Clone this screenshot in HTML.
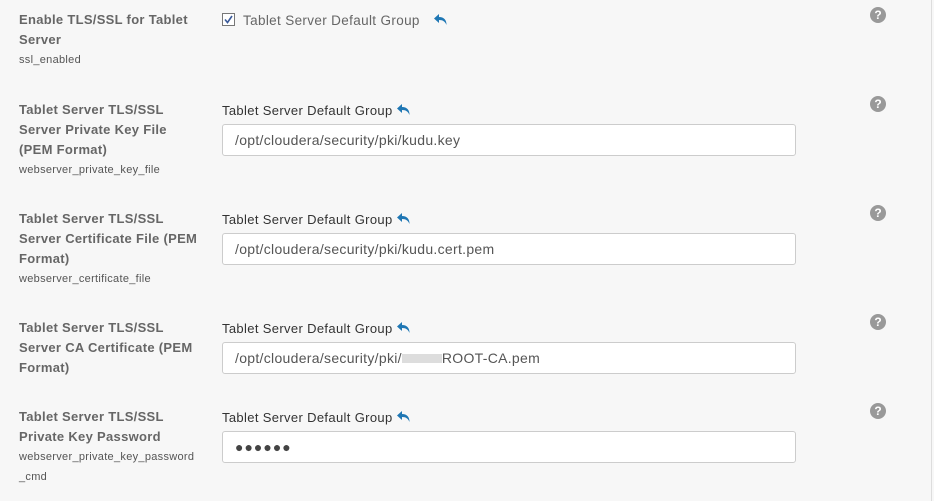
<!DOCTYPE html>
<html><head><style>
body{margin:0;width:934px;height:501px;background:#f7f7f7;font-family:"Liberation Sans",sans-serif;position:relative;overflow:hidden}
.edge{position:absolute;left:931px;top:0;width:1px;height:501px;background:#ddd}
.lbl{position:absolute;left:19px;width:200px;font-weight:bold;font-size:13px;line-height:20px;color:#666;letter-spacing:0.3px;white-space:nowrap}
.code{font-weight:normal;font-size:11px;color:#555;line-height:20px;letter-spacing:0.3px}
.grp{position:absolute;left:222px;font-size:13px;color:#333;letter-spacing:0.35px}
.inp{position:absolute;left:222px;height:30px;background:#fff;border:1px solid #ccc;border-radius:3px;font-size:14px;color:#555;line-height:30px;padding-left:12px;width:560px;letter-spacing:0.3px}
.help{position:absolute;left:870px;width:16px;height:16px;border-radius:50%;background:#999;color:#fff;font-weight:bold;font-size:12px;text-align:center;line-height:16px}
.undo{display:inline-block;vertical-align:-1px}
.cb{display:inline-block;width:11px;height:11px;border:1px solid #777;background:#fff;vertical-align:-1px;margin-right:8px;position:relative}
</style></head><body>
<div class="edge"></div>
<svg width="0" height="0" style="position:absolute"><defs><symbol id="u" viewBox="0 0 14 12"><path d="M5 0 L0 4.5 L5 9 L5 6 C9 6 11 7.5 12.5 11 C12.5 6 10 3 5 3 Z" fill="#1f77b4"/></symbol></defs></svg>

<div class="lbl" style="top:10px">Enable TLS/SSL for Tablet<br>Server<div class="code">ssl_enabled</div></div>
<div class="grp" style="top:13px;color:#666;font-size:13.5px"><span class="cb"><svg width="11" height="11" style="position:absolute;left:0;top:0"><path d="M2 5.5 L4.5 8.5 L9 2" stroke="#3a5a9a" stroke-width="1.6" fill="none"/></svg></span>Tablet Server Default Group <svg class="undo" width="14" height="12" style="margin-left:10px"><use href="#u"/></svg></div>
<div class="help" style="top:7px">?</div>

<div class="lbl" style="top:100px">Tablet Server TLS/SSL<br>Server Private Key File<br>(PEM Format)<div class="code">webserver_private_key_file</div></div>
<div class="grp" style="top:103px">Tablet Server Default Group <svg class="undo" width="14" height="12"><use href="#u"/></svg></div>
<div class="inp" style="top:124px">/opt/cloudera/security/pki/kudu.key</div>
<div class="help" style="top:96px">?</div>

<div class="lbl" style="top:209px">Tablet Server TLS/SSL<br>Server Certificate File (PEM<br>Format)<div class="code">webserver_certificate_file</div></div>
<div class="grp" style="top:212px">Tablet Server Default Group <svg class="undo" width="14" height="12"><use href="#u"/></svg></div>
<div class="inp" style="top:233px">/opt/cloudera/security/pki/kudu.cert.pem</div>
<div class="help" style="top:205px">?</div>

<div class="lbl" style="top:318px">Tablet Server TLS/SSL<br>Server CA Certificate (PEM<br>Format)</div>
<div class="grp" style="top:321px">Tablet Server Default Group <svg class="undo" width="14" height="12"><use href="#u"/></svg></div>
<div class="inp" style="top:342px">/opt/cloudera/security/pki/<span style="display:inline-block;width:40px;height:9px;background:#ddd;vertical-align:0"></span>ROOT-CA.pem</div>
<div class="help" style="top:314px">?</div>

<div class="lbl" style="top:407px">Tablet Server TLS/SSL<br>Private Key Password<div class="code">webserver_private_key_password<br>_cmd</div></div>
<div class="grp" style="top:410px">Tablet Server Default Group <svg class="undo" width="14" height="12"><use href="#u"/></svg></div>
<div class="inp" style="top:431px;color:#444;font-size:14px;letter-spacing:1px">●●●●●●</div>
<div class="help" style="top:403px">?</div>
</body></html>
